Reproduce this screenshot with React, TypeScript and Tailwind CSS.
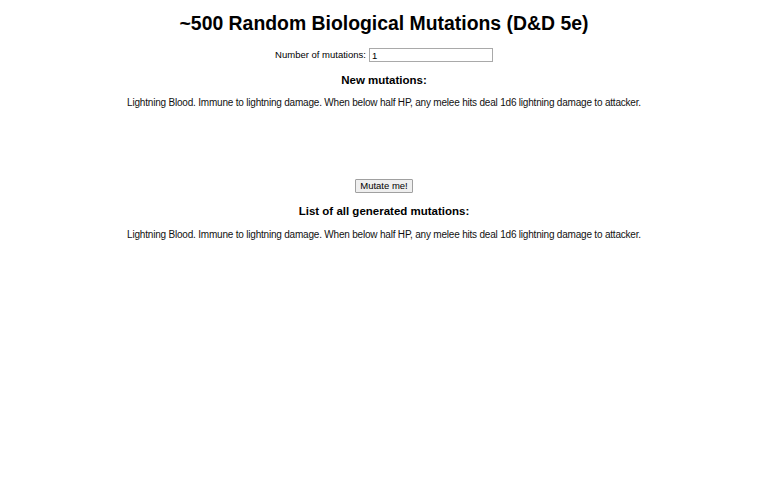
export default function App() {
  const text =
    "Lightning Blood. Immune to lightning damage. When below half HP, any melee hits deal 1d6 lightning damage to attacker.";
  return (
    <div className="w-[768px] h-[480px] bg-white text-black text-center" style={{ fontFamily: '"Liberation Sans", Arial, sans-serif' }}>
      <div className="pt-[11px] h-[46px]">
        <h1 className="text-[19.4px] leading-[24px] font-bold">~500 Random Biological Mutations (D&amp;D 5e)</h1>
      </div>
      <div className="flex justify-center items-center h-[16px] mt-[1px] text-[9.5px]">
        <span className="mr-[3px]">Number of mutations:</span>
        <input
          defaultValue="1"
          className="w-[124px] h-[14px] border border-[#a9a9a9] text-[9.5px] px-[2px] leading-[12px] outline-none"
        />
      </div>
      <div className="mt-[10px] text-[11.5px] leading-[14px] font-bold">New mutations:</div>
      <div className="mt-[10px] text-[10px] leading-[12px] tracking-[-0.2px] text-[#111]">{text}</div>
      <div className="h-[70px]" />
      <div className="flex justify-center">
        <button className="h-[14px] px-[4px] text-[9.5px] leading-[12px] border border-[#a0a0a0] bg-[#efefef] rounded-[1px]">Mutate me!</button>
      </div>
      <div className="mt-[11px] text-[11.5px] leading-[14px] font-bold">List of all generated mutations:</div>
      <div className="mt-[11px] text-[10px] leading-[12px] tracking-[-0.2px] text-[#111]">{text}</div>
    </div>
  );
}
